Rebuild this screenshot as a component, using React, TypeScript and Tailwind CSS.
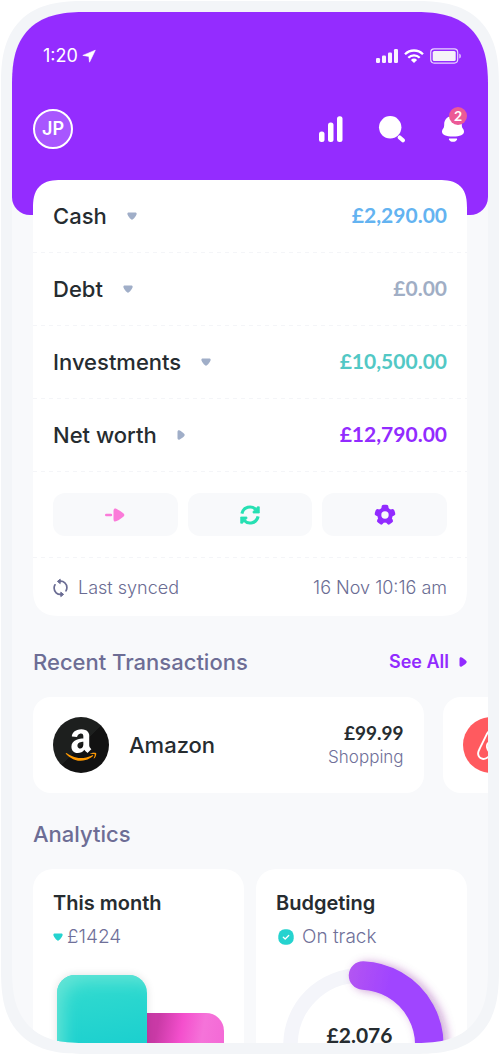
import type { ReactNode } from "react";
import { FaAirbnb, FaAmazon } from "react-icons/fa";

function CaretDown({ className }: { className: string }) {
  return (
    <svg width="10" height="8" viewBox="0 0 10 8" fill="currentColor" className={className} aria-hidden="true">
      <path d="M2 .5h6c1.400 0 2.100 1 1.400 2.200C8.700 4.200 7.500 5.900 6.200 7.100c-.8.800-1.600.800-2.400 0C2.500 5.900 1.300 4.200.6 2.700 0 1.500.6.500 2 .5Z" />
    </svg>
  );
}

function CaretRight({ className }: { className: string }) {
  return (
    <svg width="8" height="10" viewBox="0 0 8 10" fill="currentColor" className={className} aria-hidden="true">
      <path d="M.5 2v6c0 1.400 1 2.100 2.200 1.400 1.500-.7 3.200-1.900 4.400-3.200.8-.8.800-1.600 0-2.400C5.900 2.500 4.200 1.300 2.700.6 1.500 0 .5.600.5 2Z" />
    </svg>
  );
}

function LocationIcon() {
  return (
    <svg width="14" height="14" viewBox="0 0 14 14" fill="#fff" aria-hidden="true">
      <path d="M13.300 1.200 7.500 13.200 6.900 7.400.8 6.400Z" stroke="#fff" strokeWidth=".6" strokeLinejoin="round" />
    </svg>
  );
}

function SignalIcon() {
  return (
    <svg width="22" height="14" viewBox="0 0 22 14" fill="#fff" fillOpacity=".94" aria-hidden="true">
      <rect x="0" y="9" width="4" height="5" rx="1.200" />
      <rect x="6" y="6.500" width="4" height="7.500" rx="1.200" />
      <rect x="12" y="3.500" width="4" height="10.500" rx="1.200" />
      <rect x="18" y="0" width="4" height="14" rx="1.200" />
    </svg>
  );
}

function WifiIcon() {
  return (
    <svg width="20" height="14" viewBox="0 0 20 14" fill="none" stroke="#fff" strokeWidth="2.300" aria-hidden="true">
      <path d="M1 5.200a12.800 12.800 0 0 1 18 0" />
      <path d="M4.300 8.700a8.100 8.100 0 0 1 11.400 0" />
      <path d="M6.900 10.900a4.400 4.400 0 0 1 6.200 0L10 14Z" fill="#fff" stroke="none" />
    </svg>
  );
}

function BatteryIcon() {
  return (
    <svg width="31" height="16" viewBox="0 0 31 16" aria-hidden="true">
      <rect x=".7" y=".9" width="27" height="14.200" rx="3.500" fill="none" stroke="#fff" strokeWidth="1.200" strokeOpacity=".8" />
      <rect x="2.700" y="2.900" width="23" height="10.200" rx="1.600" fill="#f5f3f8" />
      <path d="M29.300 5.400c1 .4 1.500 1.300 1.500 2.600s-.5 2.200-1.500 2.600Z" fill="#fff" fillOpacity=".8" />
    </svg>
  );
}

function StatsIcon() {
  return (
    <svg width="24" height="28" viewBox="0 0 24 28" fill="#fff" aria-hidden="true">
      <rect x="0" y="16.500" width="5.500" height="10.500" rx="2.500" />
      <rect x="9" y="7.500" width="5.500" height="19.500" rx="2.500" />
      <rect x="18" y="1.200" width="5.500" height="25.800" rx="2.500" />
    </svg>
  );
}

function SearchIcon() {
  return (
    <svg width="28" height="28" viewBox="0 0 28 28" aria-hidden="true">
      <circle cx="12.200" cy="12.300" r="11.200" fill="#fff" />
      <path d="m21.700 22.400 3.200 2.900" stroke="#fff" strokeWidth="4" strokeLinecap="round" />
    </svg>
  );
}

function BellIcon() {
  return (
    <svg width="24" height="28" viewBox="0 0 24 28" fill="#fff" aria-hidden="true">
      <path d="M12 1c5.300 0 8.800 3.500 8.800 8.200 0 2 .2 3.100 1 4.300.8 1.200 1.200 2 1.200 3.300 0 3.100-3.700 4.700-11 4.700S1 19.900 1 16.800c0-1.300.4-2.100 1.200-3.300.8-1.200 1-2.300 1-4.300C3.200 4.500 6.700 1 12 1Z" />
      <path d="M8.800 23.400h6.400c1 0 1.200.7.600 1.500-.9 1.200-2.200 1.900-3.800 1.900s-2.900-.7-3.800-1.900c-.6-.8-.4-1.500.6-1.500Z" />
    </svg>
  );
}

function SendIcon() {
  return (
    <svg width="20" height="16" viewBox="0 0 20 16" fill="#fb7bd9" aria-hidden="true">
      <rect x="0" y="6.700" width="7.200" height="2.600" rx="1.300" />
      <path d="M8.500 4c0-2.400 1.200-3.200 3.200-2.100 2.300 1.200 4.900 2.800 6.900 4.700 1 .9 1 1.900 0 2.800-2 1.900-4.600 3.500-6.900 4.700-2 1.100-3.200.3-3.200-2.100Z" />
    </svg>
  );
}

function RefreshIcon() {
  return (
    <svg width="20" height="20" viewBox="0 0 20 20" aria-hidden="true">
      <g fill="none" stroke="#27e0b3" strokeWidth="3.100">
        <path d="M1.900 8.600A8.200 8.200 0 0 1 16 4.700" />
        <path d="M18.100 11.400A8.200 8.200 0 0 1 4 15.300" />
      </g>
      <g fill="#27e0b3" stroke="#27e0b3" strokeWidth=".8" strokeLinejoin="round">
        <path d="M19.300 1.800v6.200h-6.200V6.200l2.200-.9 2-3.500Z" />
        <path d="M.7 18.200V12h6.200v1.800l-2.200.9-2 3.500Z" />
      </g>
    </svg>
  );
}

const petals = [0, 72, 144, 216, 288];

function GearIcon() {
  return (
    <svg width="22" height="22" viewBox="0 0 22 22" aria-hidden="true">
      <g fill="#922bff">
        {petals.map((angle) => (
          <rect key={angle} x="7.500" y=".7" width="7" height="8" rx="2.200" transform={`rotate(${angle} 11 11)`} />
        ))}
        <circle cx="11" cy="11" r="7.700" />
      </g>
      <circle cx="11" cy="11" r="3.700" fill="#f8f9fb" />
    </svg>
  );
}

function SyncIcon() {
  return (
    <svg width="15" height="20" viewBox="0 0 15 20" aria-hidden="true">
      <g fill="none" stroke="#6a6c93" strokeWidth="1.700" strokeLinecap="round">
        <path d="M6.500 3.300c4.400-.6 7.400 2.600 7.400 6.300 0 1.300-.3 2.300-.9 3.200" />
        <path d="M8.500 16.300c-4.400.6-7.400-2.600-7.400-6.300 0-1.300.3-2.300.9-3.200" />
      </g>
      <g fill="#6a6c93" stroke="#6a6c93" strokeLinejoin="round">
        <path d="M7.200 1.200v4.400L4.400 3.400Z" />
        <path d="M7.800 14.200v4.400l2.800-2.200Z" />
      </g>
    </svg>
  );
}

function CheckBadge() {
  return (
    <svg width="16" height="16" viewBox="0 0 16 16" aria-hidden="true">
      <rect x=".3" y=".3" width="15.400" height="15.400" rx="6.500" fill="#25d3cf" />
      <path d="m5.300 8.200 1.900 1.800 3.500-3.500" fill="none" stroke="#fff" strokeWidth="1.300" strokeLinecap="round" strokeLinejoin="round" />
    </svg>
  );
}

function BudgetRing() {
  return (
    <svg width="172" height="172" viewBox="0 0 172 172" className="overflow-visible" aria-hidden="true">
      <defs>
        <linearGradient id="ring" gradientUnits="userSpaceOnUse" x1="76" y1="20" x2="116" y2="28">
          <stop offset="0" stopColor="#b254f3" />
          <stop offset="1" stopColor="#a044ff" />
        </linearGradient>
        <filter id="ringShadow" x="-30%" y="-30%" width="170%" height="160%">
          <feDropShadow dx="4" dy="1" stdDeviation="5" floodColor="#7b1f8f" floodOpacity=".4" />
        </filter>
      </defs>
      <circle cx="86" cy="86" r="69.500" fill="none" stroke="#f4f5fa" strokeWidth="14.500" />
      <path
        d="M89 16.500A69.500 69.500 0 0 1 146 120.700"
        fill="none"
        stroke="url(#ring)"
        strokeWidth="28.500"
        strokeLinecap="round"
        filter="url(#ringShadow)"
      />
    </svg>
  );
}

function DashedLine() {
  return <div className="h-px bg-[repeating-linear-gradient(to_right,#f4f5f8_0_4px,transparent_4px_8px)]" />;
}

const accounts = [
  { name: "Cash", amount: "£2,290.00", color: "text-[#63b3f1]", open: false },
  { name: "Debt", amount: "£0.00", color: "text-[#a0aec5]", open: false },
  { name: "Investments", amount: "£10,500.00", color: "text-[#52c8c5]", open: false },
  { name: "Net worth", amount: "£12,790.00", color: "text-[#922bff]", open: true },
];

function ActionButton({ label, children }: { label: string; children: ReactNode }) {
  return (
    <button type="button" aria-label={label} className="flex h-[43px] items-center justify-center rounded-xl bg-[#f8f9fb]">
      {children}
    </button>
  );
}

function Header() {
  return (
    <header className="rounded-b-[18px] bg-[#942cff] px-[21px] pt-8 pb-[66px] text-white">
      <div className="flex h-6 items-center justify-between pr-1.5 pl-2.5">
        <div className="flex items-center gap-1 text-lg">
          <span>1:20</span>
          <LocationIcon />
        </div>
        <div className="flex items-center gap-1.5">
          <SignalIcon />
          <WifiIcon />
          <BatteryIcon />
        </div>
      </div>
      <div className="mt-[41px] flex h-10 items-center justify-between">
        <button
          type="button"
          className="flex size-10 items-center justify-center rounded-full border-2 border-white bg-[#a856ff] text-lg font-semibold"
        >
          JP
        </button>
        <nav className="flex items-center gap-[35px] pr-0.5">
          <button type="button" aria-label="Statistics">
            <StatsIcon />
          </button>
          <button type="button" aria-label="Search">
            <SearchIcon />
          </button>
          <button type="button" aria-label="Notifications" className="relative">
            <BellIcon />
            <span className="absolute -top-2 -right-0.5 flex size-[18px] items-center justify-center rounded-full bg-[#ec5a96] font-[Lato,sans-serif] text-sm font-bold">
              2
            </span>
          </button>
        </nav>
      </div>
    </header>
  );
}

export default function App() {
  return (
    <div className="h-screen bg-white p-px font-[Inter,sans-serif] text-[#262c30]">
      <div className="h-full overflow-hidden rounded-[84px] bg-[#f3f5f8] p-[11px] [corner-shape:superellipse(1.4)]">
        <main className="h-full overflow-hidden rounded-[74px] bg-[#f8f9fb] [corner-shape:superellipse(1.4)]">
          <Header />
          <div className="-mt-[35px] px-[21px]">
            <section className="rounded-[28px] bg-white [corner-shape:superellipse(1.4)]">
              {accounts.map((account) => (
                <div key={account.name}>
                  <div className="flex h-[72px] items-center justify-between px-5">
                    <button type="button" className="flex items-center gap-5 text-[22px] leading-8 font-medium">
                      {account.name}
                      {account.open ? <CaretRight className="text-[#a0aec8]" /> : <CaretDown className="text-[#a0aec8]" />}
                    </button>
                    <span className={`pb-0.5 font-[Lato,sans-serif] text-[21px] leading-8 font-bold ${account.color}`}>
                      {account.amount}
                    </span>
                  </div>
                  <DashedLine />
                </div>
              ))}
              <div className="grid grid-cols-3 gap-2.5 px-5 py-[21px]">
                <ActionButton label="Transfer">
                  <SendIcon />
                </ActionButton>
                <ActionButton label="Refresh">
                  <RefreshIcon />
                </ActionButton>
                <ActionButton label="Settings">
                  <GearIcon />
                </ActionButton>
              </div>
              <DashedLine />
              <div className="flex h-[58px] items-center justify-between px-5 pt-0.5 text-lg font-light text-[#6a6c93]">
                <span className="flex items-center gap-2.5">
                  <SyncIcon />
                  Last synced
                </span>
                <time>16 Nov 10:16 am</time>
              </div>
            </section>

            <div className="mt-8 flex h-7 items-center justify-between">
              <h2 className="text-[22px] font-medium text-[#6d6d95]">Recent Transactions</h2>
              <a href="#transactions" className="flex items-center gap-2.5 text-lg font-semibold text-[#922bff]">
                See All
                <CaretRight className="" />
              </a>
            </div>
            <div id="transactions" className="mt-[21px] flex gap-[19px]">
              <article className="flex h-24 w-[90%] shrink-0 items-center rounded-[18px] bg-white px-5">
                <div className="relative flex size-14 items-center justify-center rounded-full bg-[linear-gradient(135deg,#1d1f1e_50%,#121212_50%)]">
                  <FaAmazon size={36} className="text-white [clip-path:polygon(0_0,100%_0,100%_66%,80%_73%,50%_77%,15%_68%,0_60%)]" />
                  <FaAmazon
                    size={36}
                    className="absolute text-[#ff9900] [clip-path:polygon(0_60%,15%_68%,50%_77%,80%_73%,100%_66%,100%_100%,0_100%)]"
                  />
                </div>
                <h3 className="ml-5 text-[22px] font-medium">Amazon</h3>
                <div className="ml-auto text-right">
                  <p className="font-[Lato,sans-serif] text-[19px] leading-6 font-bold">£99.99</p>
                  <p className="text-[17px] leading-6 font-light text-[#6f7099]">Shopping</p>
                </div>
              </article>
              <article className="flex h-24 w-[90%] shrink-0 items-center rounded-[18px] bg-white px-5">
                <div className="flex size-14 items-center justify-center rounded-full bg-[#ff5a5f] text-white">
                  <FaAirbnb size={34} />
                </div>
              </article>
            </div>

            <h2 className="mt-[27px] text-[22px] leading-7 font-medium text-[#6d6d95]">Analytics</h2>
            <div className="mt-[21px] grid grid-cols-2 gap-3">
              <section className="rounded-t-[20px] bg-white px-5 pt-[22px]">
                <h3 className="text-[20px] leading-6 font-semibold">This month</h3>
                <p className="mt-2 flex items-center gap-1 text-[19px] leading-7 font-light text-[#6f7099]">
                  <CaretDown className="text-[#25d3cf]" />
                  £1424
                </p>
                <div className="mt-6 flex h-40 items-end pl-1">
                  <div className="relative h-40 w-[54%] rounded-t-[18px] bg-[linear-gradient(170deg,#35dccf,#1acfcf_50%)] shadow-[0_0_8px_rgba(0,0,0,0.12),inset_10px_10px_16px_-4px_#62e4d6]" />
                  <div className="-ml-6 h-[122px] w-[61%] rounded-tr-[18px] bg-[linear-gradient(100deg,#c93aa6_30%,#f44fcd_50%,#f573d9_68%,#f362d4)]" />
                </div>
              </section>
              <section className="rounded-t-[20px] bg-white px-5 pt-[22px]">
                <h3 className="text-[20px] leading-6 font-semibold">Budgeting</h3>
                <p className="mt-2 flex items-center gap-2 pl-0.5 text-[19px] leading-7 font-light text-[#6f7099]">
                  <CheckBadge />
                  On track
                </p>
                <div className="relative mt-2 flex justify-center pr-1">
                  <BudgetRing />
                  <span className="absolute inset-x-0 top-[62px] pr-1 text-center font-[Lato,sans-serif] text-[21px] leading-7 font-bold">
                    £2.076
                  </span>
                </div>
              </section>
            </div>
          </div>
        </main>
      </div>
    </div>
  );
}
